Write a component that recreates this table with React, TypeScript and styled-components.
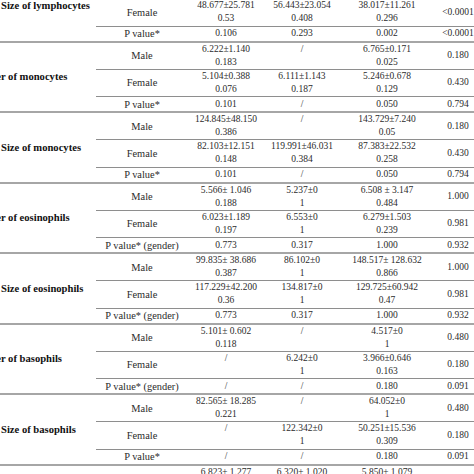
import styled, { createGlobalStyle } from 'styled-components'

const GlobalStyle = createGlobalStyle`
  html, body {
    margin: 0;
    padding: 0;
    background: #ffffff;
  }
  body {
    width: 474px;
    height: 474px;
    overflow: hidden;
  }
`

type Value = string[]

interface SexRow {
  sex: string
  a: Value
  b: Value
  c: Value
  p: string
}

interface Group {
  label: string
  cut?: number
  rows: SexRow[]
}

const groups: Group[] = [
  {
    label: 'Size of lymphocytes',
    rows: [
      { sex: 'Male', a: ['', ''], b: ['', ''], c: ['', ''], p: '' },
      { sex: 'Female', a: ['48.677±25.781', '0.53'], b: ['56.443±23.054', '0.408'], c: ['38.017±11.261', '0.296'], p: '<0.0001' },
      { sex: 'P value*', a: ['0.106'], b: ['0.293'], c: ['0.002'], p: '<0.0001' },
    ],
  },
  {
    label: 'Number of monocytes',
    cut: 33,
    rows: [
      { sex: 'Male', a: ['6.222±1.140', '0.183'], b: ['/', ''], c: ['6.765±0.171', '0.025'], p: '0.180' },
      { sex: 'Female', a: ['5.104±0.388', '0.076'], b: ['6.111±1.143', '0.187'], c: ['5.246±0.678', '0.129'], p: '0.430' },
      { sex: 'P value*', a: ['0.101'], b: ['/'], c: ['0.050'], p: '0.794' },
    ],
  },
  {
    label: 'Size of monocytes',
    rows: [
      { sex: 'Male', a: ['124.845±48.150', '0.386'], b: ['/', ''], c: ['143.729±7.240', '0.05'], p: '0.180' },
      { sex: 'Female', a: ['82.103±12.151', '0.148'], b: ['119.991±46.031', '0.384'], c: ['87.383±22.532', '0.258'], p: '0.430' },
      { sex: 'P value*', a: ['0.101'], b: ['/'], c: ['0.050'], p: '0.794' },
    ],
  },
  {
    label: 'Number of eosinophils',
    cut: 33,
    rows: [
      { sex: 'Male', a: ['5.566± 1.046', '0.188'], b: ['5.237±0', '1'], c: ['6.508 ± 3.147', '0.484'], p: '1.000' },
      { sex: 'Female', a: ['6.023±1.189', '0.197'], b: ['6.553±0', '1'], c: ['6.279±1.503', '0.239'], p: '0.981' },
      { sex: 'P value* (gender)', a: ['0.773'], b: ['0.317'], c: ['1.000'], p: '0.932' },
    ],
  },
  {
    label: 'Size of eosinophils',
    rows: [
      { sex: 'Male', a: ['99.835± 38.686', '0.387'], b: ['86.102±0', '1'], c: ['148.517± 128.632', '0.866'], p: '1.000' },
      { sex: 'Female', a: ['117.229±42.200', '0.36'], b: ['134.817±0', '1'], c: ['129.725±60.942', '0.47'], p: '0.981' },
      { sex: 'P value* (gender)', a: ['0.773'], b: ['0.317'], c: ['1.000'], p: '0.932' },
    ],
  },
  {
    label: 'Number of basophils',
    cut: 33,
    rows: [
      { sex: 'Male', a: ['5.101± 0.602', '0.118'], b: ['/', ''], c: ['4.517±0', '1'], p: '0.480' },
      { sex: 'Female', a: ['/', ''], b: ['6.242±0', '1'], c: ['3.966±0.646', '0.163'], p: '0.180' },
      { sex: 'P value* (gender)', a: ['/'], b: ['/'], c: ['0.180'], p: '0.091' },
    ],
  },
  {
    label: 'Size of basophils',
    rows: [
      { sex: 'Male', a: ['82.565± 18.285', '0.221'], b: ['/', ''], c: ['64.052±0', '1'], p: '0.480' },
      { sex: 'Female', a: ['/', ''], b: ['122.342±0', '1'], c: ['50.251±15.536', '0.309'], p: '0.180' },
      { sex: 'P value*', a: ['/'], b: ['/'], c: ['0.180'], p: '0.091' },
    ],
  },
  {
    label: '',
    rows: [
      { sex: 'Male', a: ['6.823± 1.277', ''], b: ['6.320± 1.020', ''], c: ['5.850± 1.079', ''], p: '' },
    ],
  },
]

const columnWidths = [96, 92, 76, 76, 94, 48]

const Frame = styled.div`
  width: 474px;
  height: 474px;
  overflow: hidden;
  background: #fff;
`

const Table = styled.table`
  margin-top: -29px;
  width: 482px;
  table-layout: fixed;
  border-collapse: collapse;
  font-family: 'Liberation Serif', 'Times New Roman', serif;
  font-size: 9.5px;
  line-height: 13px;
  color: #2b2b2b;
`

const Col = styled.col<{ $w: number }>`
  width: ${(p) => p.$w}px;
`

const Row = styled.tr<{ $short: boolean }>`
  height: ${(p) => (p.$short ? '15.5px' : '27.5px')};
`

const Cell = styled.td<{ $end: boolean }>`
  padding: 0;
  text-align: center;
  vertical-align: middle;
  white-space: nowrap;
  border-bottom: ${(p) => (p.$end ? '2px solid #a6a6a6' : '1px solid #8e8e8e')};
`

const SexCell = styled(Cell)`
  font-size: 10.4px;
`

const LabelCell = styled.td<{ $cut: number }>`
  padding: 0 0 0 1px;
  text-align: left;
  vertical-align: middle;
  white-space: nowrap;
  overflow: hidden;
  font-size: 10.6px;
  font-weight: bold;
  color: #111;
  text-indent: ${(p) => -p.$cut}px;
  border-bottom: 2px solid #a6a6a6;
`

const Line = styled.div`
  height: 13px;
`

function ValueCell({ value, end }: { value: Value; end: boolean }) {
  return (
    <Cell $end={end}>
      {value.map((line, i) => (
        <Line key={i}>{line || '\u00a0'}</Line>
      ))}
    </Cell>
  )
}

export default function App() {
  return (
    <>
      <GlobalStyle />
      <Frame>
        <Table>
          <colgroup>
            {columnWidths.map((w, i) => (
              <Col key={i} $w={w} />
            ))}
          </colgroup>
          <tbody>
            {groups.map((g) =>
              g.rows.map((r, i) => {
                const end = i === g.rows.length - 1
                const short = r.a.length === 1
                return (
                  <Row key={g.label + r.sex} $short={short}>
                    {i === 0 && (
                      <LabelCell rowSpan={g.rows.length} $cut={g.cut ?? 0}>
                        {g.label}
                      </LabelCell>
                    )}
                    <SexCell $end={end}>{r.sex}</SexCell>
                    <ValueCell value={r.a} end={end} />
                    <ValueCell value={r.b} end={end} />
                    <ValueCell value={r.c} end={end} />
                    <Cell $end={end}>{r.p}</Cell>
                  </Row>
                )
              })
            )}
          </tbody>
        </Table>
      </Frame>
    </>
  )
}
